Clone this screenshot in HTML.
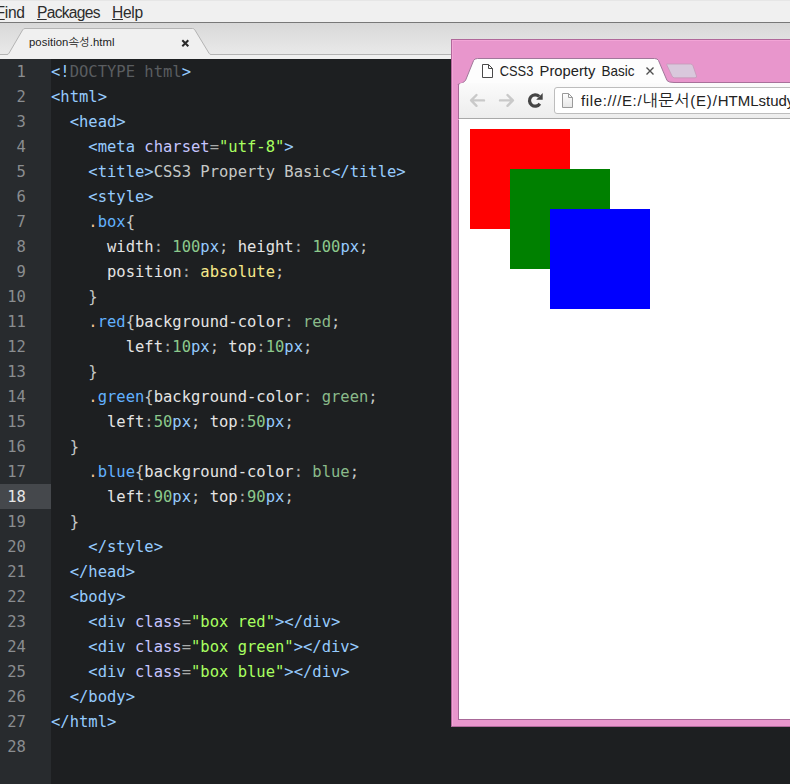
<!DOCTYPE html>
<html><head><meta charset="utf-8"><title>position</title>
<style>
*{margin:0;padding:0;box-sizing:border-box}
html,body{width:790px;height:784px;overflow:hidden;background:#1d1f21;font-family:"Liberation Sans","NanumGothic",sans-serif}
#menu{position:absolute;left:0;top:0;width:790px;height:23px;background:#f0f0f0;border-top:1px solid #e6e6e6;border-bottom:1px solid #787878}
#menu span{position:absolute;top:3px;font-size:15.600px;color:#2c2c2c;line-height:18px;letter-spacing:-0.300px}
#menu u{text-decoration:underline}
#tabbar{position:absolute;left:0;top:23px;width:790px;height:36px;background:linear-gradient(#d8d8d8,#e9e9e9 31px,#b4b4b4 31px,#b4b4b4 32px,#f0f0f0 32px)}
#tab{position:absolute;left:0;top:0;width:215px;height:36px}
#tab text{font-family:"Liberation Sans","NanumGothic",sans-serif;font-size:11.3px;fill:#222}
#editor{position:absolute;left:0;top:59px;width:790px;height:725px;background:#1d1f21}
#gutter{position:absolute;left:0;top:0;width:51px;height:725px;background:#282b2e}
#hl{position:absolute;left:0;top:425px;width:51px;height:25px;background:#45484c}
.ln{position:absolute;left:0;margin-top:1px;width:25.800px;text-align:right;font:15.5px/25px "DejaVu Sans Mono","Liberation Mono",monospace;color:#8a8d90;height:25px}
.ln.cur{color:#e6e6e6}
#code{position:absolute;left:51px;top:1px;font:15.5px/25px "DejaVu Sans Mono","Liberation Mono",monospace;color:#c5c8c6;white-space:pre}
#code div{height:25px}
.t{color:#96cbfe}.s{color:#a8ff60}.a{color:#c6c5fe}.g{color:#5a5d60}.w{color:#e4e4e4}.n{color:#8cc88c}.u{color:#96cbfe}.y{color:#f5e88a}.k{color:#8aba8a}.c{color:#62b1fe}.p{color:#c5c8c6}.d{color:#f2c494}.e{color:#a8abaa}
#chrome{position:absolute;left:451px;top:39px;width:345px;height:688px;background:#e896cc;border:1px solid #b0689a;box-shadow:inset 1px 1px 0 #f2a4d6}
#ctool{position:absolute;left:7px;top:43px;width:340px;height:36px;box-shadow:-1px 0 0 #a86898;border-top-left-radius:3px;background:linear-gradient(#fbfbfb,#ededed);border-bottom:1px solid #a9a9a9}
#cpage{position:absolute;left:7px;top:79px;box-shadow:-1px 1px 0 #a86898;width:340px;height:600px;background:#fff}
.box{position:absolute;width:100px;height:100px}
#ctab{position:absolute;left:0;top:0;width:340px;height:45px}
#ctab text, #url{font-family:"Liberation Sans","NanumGothic",sans-serif}
#url{position:absolute;left:95px;top:4px;width:260px;height:27px;background:#fff;border:1px solid #bdbdbd;border-radius:3px;font-size:15px;line-height:25px;color:#222;padding-left:26px;white-space:nowrap;overflow:hidden}
</style></head><body>
<div id="menu"><span style="left:-4.5px"><u>F</u>ind</span><span style="left:37px;letter-spacing:-0.700px"><u>P</u>ackages</span><span style="left:112px"><u>H</u>elp</span></div>
<div id="tabbar">
<svg id="tab" viewBox="0 0 215 36"><path d="M0 31.500 L7 31.500 Q8.200 31.500 9 30.200 L22.700 6.800 Q23.500 5.500 25 5.500 L192.500 5.500 Q194 5.500 194.800 6.800 L209 30.200 Q209.800 31.500 211 31.500 L215 31.500 L215 36 L0 36 Z" fill="#f0f0f0" stroke="#b4b4b4"/><rect x="0" y="32" width="215" height="4" fill="#f0f0f0"/>
<text x="29" y="23" textLength="85.500" lengthAdjust="spacing">position속성.html</text>
<path d="M182.300 17.200 L188.300 23.200 M188.300 17.200 L182.300 23.200" stroke="#2a2a2a" stroke-width="2"/></svg>
</div>
<div id="editor"><div id="gutter"><div id="hl"></div><div class="ln" style="top:0px">1</div><div class="ln" style="top:25px">2</div><div class="ln" style="top:50px">3</div><div class="ln" style="top:75px">4</div><div class="ln" style="top:100px">5</div><div class="ln" style="top:125px">6</div><div class="ln" style="top:150px">7</div><div class="ln" style="top:175px">8</div><div class="ln" style="top:200px">9</div><div class="ln" style="top:225px">10</div><div class="ln" style="top:250px">11</div><div class="ln" style="top:275px">12</div><div class="ln" style="top:300px">13</div><div class="ln" style="top:325px">14</div><div class="ln" style="top:350px">15</div><div class="ln" style="top:375px">16</div><div class="ln" style="top:400px">17</div><div class="ln cur" style="top:425px">18</div><div class="ln" style="top:450px">19</div><div class="ln" style="top:475px">20</div><div class="ln" style="top:500px">21</div><div class="ln" style="top:525px">22</div><div class="ln" style="top:550px">23</div><div class="ln" style="top:575px">24</div><div class="ln" style="top:600px">25</div><div class="ln" style="top:625px">26</div><div class="ln" style="top:650px">27</div><div class="ln" style="top:675px">28</div></div>
<div id="code"><div><span class="t">&lt;!</span><span class="g">DOCTYPE html</span><span class="t">&gt;</span></div><div><span class="t">&lt;html&gt;</span></div><div>  <span class="t">&lt;head&gt;</span></div><div>    <span class="t">&lt;meta </span><span class="a">charset</span><span class="e">=</span><span class="s">"utf-8"</span><span class="t">&gt;</span></div><div>    <span class="t">&lt;title&gt;</span><span class="p">CSS3 Property Basic</span><span class="t">&lt;/title&gt;</span></div><div>    <span class="t">&lt;style&gt;</span></div><div>    <span class="d">.</span><span class="c">box</span><span class="p">{</span></div><div>      <span class="w">width</span><span class="e">:</span> <span class="n">100</span><span class="u">px</span><span class="p">; </span><span class="w">height</span><span class="e">:</span> <span class="n">100</span><span class="u">px</span><span class="p">;</span></div><div>      <span class="w">position</span><span class="e">:</span> <span class="y">absolute</span><span class="p">;</span></div><div>    <span class="p">}</span></div><div>    <span class="d">.</span><span class="c">red</span><span class="p">{</span><span class="w">background-color</span><span class="e">:</span> <span class="k">red</span><span class="p">;</span></div><div>        <span class="w">left</span><span class="e">:</span><span class="n">10</span><span class="u">px</span><span class="p">; </span><span class="w">top</span><span class="e">:</span><span class="n">10</span><span class="u">px</span><span class="p">;</span></div><div>    <span class="p">}</span></div><div>    <span class="d">.</span><span class="c">green</span><span class="p">{</span><span class="w">background-color</span><span class="e">:</span> <span class="k">green</span><span class="p">;</span></div><div>      <span class="w">left</span><span class="e">:</span><span class="n">50</span><span class="u">px</span><span class="p">; </span><span class="w">top</span><span class="e">:</span><span class="n">50</span><span class="u">px</span><span class="p">;</span></div><div>  <span class="p">}</span></div><div>    <span class="d">.</span><span class="c">blue</span><span class="p">{</span><span class="w">background-color</span><span class="e">:</span> <span class="k">blue</span><span class="p">;</span></div><div>      <span class="w">left</span><span class="e">:</span><span class="n">90</span><span class="u">px</span><span class="p">; </span><span class="w">top</span><span class="e">:</span><span class="n">90</span><span class="u">px</span><span class="p">;</span></div><div>  <span class="p">}</span></div><div>    <span class="t">&lt;/style&gt;</span></div><div>  <span class="t">&lt;/head&gt;</span></div><div>  <span class="t">&lt;body&gt;</span></div><div>    <span class="t">&lt;div </span><span class="a">class</span><span class="e">=</span><span class="s">"box red"</span><span class="t">&gt;&lt;/div&gt;</span></div><div>    <span class="t">&lt;div </span><span class="a">class</span><span class="e">=</span><span class="s">"box green"</span><span class="t">&gt;&lt;/div&gt;</span></div><div>    <span class="t">&lt;div </span><span class="a">class</span><span class="e">=</span><span class="s">"box blue"</span><span class="t">&gt;&lt;/div&gt;</span></div><div>  <span class="t">&lt;/body&gt;</span></div><div><span class="t">&lt;/html&gt;</span></div><div></div></div>
</div>
<div id="chrome">
<svg id="ctab" viewBox="0 0 340 45"><path d="M222 42.500 L340 42.500" stroke="#a8709a" fill="none"/><path d="M6 45 L6 44.500 Q11 43.500 13.500 40.500 L21.600 20.500 Q22.500 18.500 25.500 18.500 L202.500 18.500 Q205.500 18.500 206.500 20.500 L215 40.500 Q216.500 42.500 222 42.500 L222 45 Z" fill="#fdfdfd" stroke="#a0789a" stroke-width="1"/>
<path d="M214.700 24 L238.500 24 Q240.300 24 241 25.800 L244.500 36 Q245 37.800 243 37.800 L222.500 37.800 Q220.800 37.800 220 36 L215.200 25.800 Q214.500 24 214.700 24 Z" fill="#d9c8dc" stroke="#c49ab8" stroke-width="0.800"/>
<path d="M30.500 24.500 h6 l4 4 v9 h-10 z M36.500 24.500 v4 h4" fill="#fff" stroke="#4a4a4a" stroke-width="1"/>
<text y="35.500" font-size="15" fill="#222"><tspan x="47.700" textLength="33.600" lengthAdjust="spacingAndGlyphs">CSS3</tspan> <tspan x="87.600" textLength="55.700" lengthAdjust="spacingAndGlyphs">Property</tspan> <tspan x="149.600" textLength="33" lengthAdjust="spacingAndGlyphs">Basic</tspan></text>
<path d="M194.500 27.500 L201.500 34.500 M201.500 27.500 L194.500 34.500" stroke="#505050" stroke-width="1.400"/></svg>
<div id="ctool">
<svg style="position:absolute;left:0;top:-1px" width="100" height="36" viewBox="0 0 100 36"><g fill="none" stroke="#c9c9c9" stroke-width="2.400" stroke-linecap="round" stroke-linejoin="round"><path d="M12.500 18.400 h12.500 M17.500 13 l-5.400 5.400 l5.400 5.400"/><path d="M41 18.400 h12.500 M48.500 13 l5.400 5.400 l-5.400 5.400"/></g><path d="M80.230 14.470 A5.700 5.700 0 1 0 80.870 21.770" fill="none" stroke="#454545" stroke-width="3.200"/><path d="M83.700 11.100 V17.700 H77.200 Z" fill="#454545"/></svg>
<div id="url"><svg style="position:absolute;left:7px;top:5px" width="11" height="15" viewBox="0 0 11 15"><defs><linearGradient id="pg" x1="0" y1="0" x2="0" y2="1"><stop offset="0" stop-color="#fff"/><stop offset="1" stop-color="#e6e6e6"/></linearGradient></defs><path d="M0.500 0.500 h6 l4 4 v10 h-10 z" fill="url(#pg)" stroke="#9a9a9a"/><path d="M6.500 0.500 v4 h4" fill="none" stroke="#9a9a9a"/></svg><span style="letter-spacing:0.640px">file:///E:/</span><span style="letter-spacing:0.600px;font-size:16.400px">내문서</span><span style="letter-spacing:0.800px">(E)/</span><span>HTMLstudy/position.html</span></div>
</div>
<div id="cpage"><div class="box" style="left:11px;top:10px;background:red"></div><div class="box" style="left:51px;top:50px;background:green"></div><div class="box" style="left:91px;top:90px;background:blue"></div></div>
</div>
</body></html>
